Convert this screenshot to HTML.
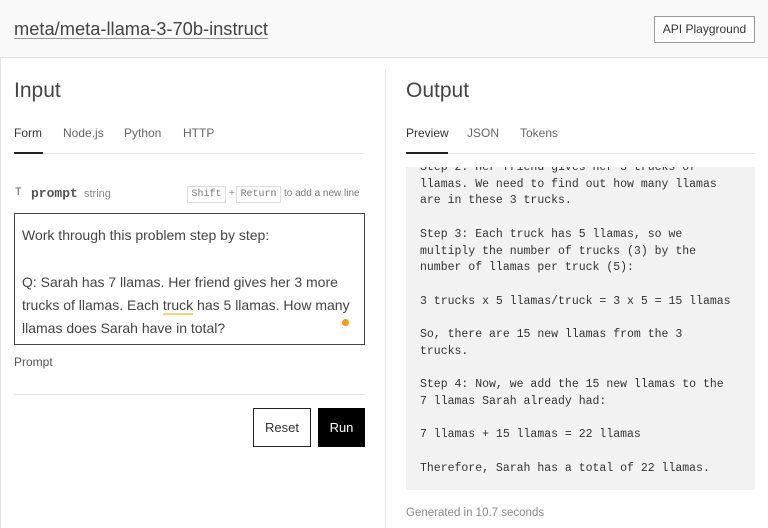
<!DOCTYPE html>
<html><head><meta charset="utf-8"><style>
*{margin:0;padding:0;box-sizing:border-box}
body{width:768px;height:528px;overflow:hidden;background:#fff;font-family:"Liberation Sans",sans-serif;color:#222;position:relative}
.a{position:absolute;white-space:nowrap}
.mono{font-family:"Liberation Mono",monospace}
</style></head><body>
<div class="a" style="left:0;top:0;width:768px;height:58px;background:#f9f9f9;border-bottom:1px solid #e4e4e4"></div>
<div class="a" style="left:14px;top:18px;font-size:18.3px;color:#444;text-decoration:underline;text-decoration-color:#999;text-underline-offset:3px">meta/meta-llama-3-70b-instruct</div>
<div class="a" style="left:654px;top:16px;width:101px;height:27px;border:1px solid #999;background:#fff;font-size:12px;line-height:25px;text-align:center;color:#333">API Playground</div>
<div class="a" style="left:0;top:58px;width:1px;height:470px;background:#e4e4e4"></div>
<div class="a" style="left:385px;top:70px;width:1px;height:458px;background:#e4e4e4"></div>

<div class="a" style="left:14px;top:79px;font-size:21px;color:#444">Input</div>
<div class="a" style="left:14px;top:126px;font-size:12px;color:#333">Form</div>
<div class="a" style="left:63px;top:126px;font-size:12px;color:#666">Node.js</div>
<div class="a" style="left:124px;top:126px;font-size:12px;color:#666">Python</div>
<div class="a" style="left:183px;top:126px;font-size:12px;color:#666">HTTP</div>
<div class="a" style="left:14px;top:153px;width:351px;height:1px;background:#e6e6e6"></div>
<div class="a" style="left:14px;top:152px;width:29px;height:2px;background:#222"></div>

<div class="a mono" style="left:15px;top:187px;font-size:11px;color:#666">T</div>
<div class="a mono" style="left:31px;top:186px;font-size:13px;font-weight:bold;color:#555">prompt</div>
<div class="a" style="left:84px;top:188px;font-size:11px;color:#888">string</div>
<div class="a mono" style="left:187px;top:186px;width:39px;height:17px;border:1px solid #ddd;font-size:10px;line-height:15px;text-align:center;color:#777">Shift</div>
<div class="a" style="left:229px;top:188px;font-size:10px;color:#888">+</div>
<div class="a mono" style="left:236px;top:186px;width:45px;height:17px;border:1px solid #ddd;font-size:10px;line-height:15px;text-align:center;color:#777">Return</div>
<div class="a" style="left:284px;top:188px;font-size:10px;color:#777">to add a new line</div>

<div class="a" style="left:14px;top:213px;width:351px;height:132px;border:1.5px solid #444"></div>
<div class="a" style="left:22px;top:224px;font-size:14px;line-height:23.3px;color:#444;white-space:pre">Work through this problem step by step:

Q: Sarah has 7 llamas. Her friend gives her 3 more
trucks of llamas. Each <span style="border-bottom:2px solid #f6d66a">truck</span> has 5 llamas. How many
llamas does Sarah have in total?</div>
<div class="a" style="left:342px;top:319px;width:7px;height:7px;border-radius:50%;background:#f90"></div>
<div class="a" style="left:14px;top:355px;font-size:12px;color:#555">Prompt</div>
<div class="a" style="left:14px;top:394px;width:351px;height:1px;background:#e6e6e6"></div>
<div class="a" style="left:253px;top:408px;width:58px;height:39px;border:1px solid #222;font-size:13px;line-height:37px;text-align:center;color:#333">Reset</div>
<div class="a" style="left:318px;top:408px;width:47px;height:39px;background:#000;color:#fff;font-size:13px;line-height:39px;text-align:center">Run</div>

<div class="a" style="left:406px;top:79px;font-size:21px;color:#444">Output</div>
<div class="a" style="left:406px;top:126px;font-size:12px;color:#333">Preview</div>
<div class="a" style="left:467px;top:126px;font-size:12px;color:#666">JSON</div>
<div class="a" style="left:520px;top:126px;font-size:12px;color:#666">Tokens</div>
<div class="a" style="left:406px;top:153px;width:349px;height:1px;background:#e6e6e6"></div>
<div class="a" style="left:406px;top:152px;width:42px;height:2px;background:#222"></div>

<div class="a" style="left:406px;top:167px;width:349px;height:323px;background:#f2f2f2;overflow:hidden">
<div class="a mono" style="left:14px;top:-7px;font-size:11.5px;line-height:16.7px;color:#333;white-space:pre">Step 2: Her friend gives her 3 trucks of
llamas. We need to find out how many llamas
are in these 3 trucks.

Step 3: Each truck has 5 llamas, so we
multiply the number of trucks (3) by the
number of llamas per truck (5):

3 trucks x 5 llamas/truck = 3 x 5 = 15 llamas

So, there are 15 new llamas from the 3
trucks.

Step 4: Now, we add the 15 new llamas to the
7 llamas Sarah already had:

7 llamas + 15 llamas = 22 llamas

Therefore, Sarah has a total of 22 llamas.</div>
</div>
<div class="a" style="left:406px;top:507px;font-size:11.5px;color:#888">Generated in 10.7 seconds</div>
</body></html>
